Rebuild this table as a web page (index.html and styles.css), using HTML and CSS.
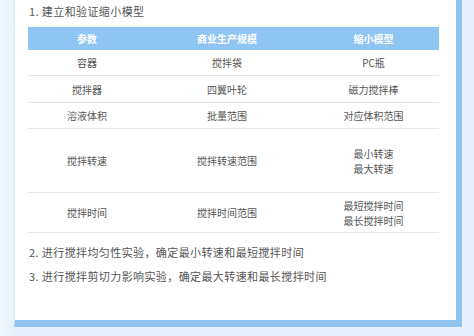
FILE: index.html
```html
<!DOCTYPE html>
<html lang="zh-CN">
<head>
  <meta charset="UTF-8">
  <meta name="viewport" content="width=device-width, initial-scale=1.0">
  <title>缩小模型</title>
  <link rel="stylesheet" href="styles.css">
</head>
<body>
  <div class="card">
    <p class="step">1. 建立和验证缩小模型</p>
    <table class="scale-table">
      <thead>
        <tr>
          <th class="col-param">参数</th>
          <th class="col-prod">商业生产规模</th>
          <th class="col-model">缩小模型</th>
        </tr>
      </thead>
      <tbody>
        <tr class="row-a">
          <td>容器</td>
          <td>搅拌袋</td>
          <td>PC瓶</td>
        </tr>
        <tr class="row-b">
          <td>搅拌器</td>
          <td>四翼叶轮</td>
          <td>磁力搅拌棒</td>
        </tr>
        <tr class="row-a">
          <td>溶液体积</td>
          <td>批量范围</td>
          <td>对应体积范围</td>
        </tr>
        <tr class="row-tall">
          <td>搅拌转速</td>
          <td>搅拌转速范围</td>
          <td>最小转速<br>最大转速</td>
        </tr>
        <tr class="row-double">
          <td>搅拌时间</td>
          <td>搅拌时间范围</td>
          <td>最短搅拌时间<br>最长搅拌时间</td>
        </tr>
      </tbody>
    </table>
    <p class="step step-2">2. 进行搅拌均匀性实验，确定最小转速和最短搅拌时间</p>
    <p class="step step-3">3. 进行搅拌剪切力影响实验，确定最大转速和最长搅拌时间</p>
  </div>
</body>
</html>
```

FILE: styles.css
```css
body {
  font-family: "Noto Sans CJK SC", "Noto Sans", sans-serif;
  margin: 0;
  padding: 0;
  background: linear-gradient(90deg, #eef6fd 0, #e4f1fc 14px, #e4f1fc 100%);
  height: 336px;
  overflow: hidden;
}

.card {
  margin-left: 14px;
  width: 427px;
  padding: 3px 0 36px 14px;
  background-color: #fff;
  border-right: 6px solid #90c4ef;
  border-bottom: 7px solid #90c4ef;
  border-left: 1px solid #dcecfa;
}

.step {
  margin: 0;
  font-size: 11px;
  line-height: 16px;
  letter-spacing: 0.4px;
  color: #555;
}

.step-2 {
  margin-top: 11px;
}

.step-3 {
  margin-top: 8px;
}

.scale-table {
  margin-top: 8px;
  width: 411px;
  margin-left: -1px;
  border-collapse: collapse;
  table-layout: fixed;
  font-size: 10px;
  color: #555;
}

.scale-table th {
  height: 23px;
  padding: 0;
  background-color: #8fc5f3;
  color: #fff;
  font-weight: bold;
}

.col-param {
  width: 118px;
}

.col-prod {
  width: 162px;
}

.col-model {
  width: 131px;
}

.scale-table td {
  padding: 0;
  text-align: center;
  vertical-align: middle;
  line-height: 15px;
  border-bottom: 1px solid #e3e6ea;
}

.row-a td {
  height: 25px;
}

.row-b td {
  height: 26px;
}

.row-tall td {
  height: 63px;
}

.row-double td {
  height: 39px;
}
```
